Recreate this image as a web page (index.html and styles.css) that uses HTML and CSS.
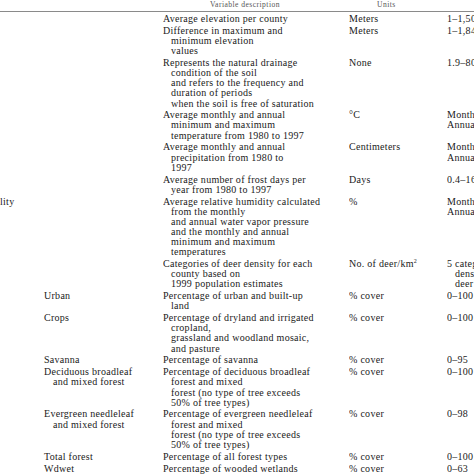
FILE: index.html
```html
<!DOCTYPE html>
<html>
<head>
<meta charset="utf-8">
<link rel="stylesheet" href="styles.css">
</head>
<body>
<div class="page">
  <div class="head">
    <div class="h-desc">Variable description</div>
    <div class="h-units">Units</div>
  </div>
  <div class="table">
    <div class="lab"></div><div class="desc">Average elevation per county</div><div class="unit">Meters</div><div class="rng">1–1,500</div>
    <div class="lab"></div><div class="desc">Difference in maximum and<br>minimum elevation<br>values</div><div class="unit">Meters</div><div class="rng">1–1,840</div>
    <div class="lab"></div><div class="desc">Represents the natural drainage<br>condition of the soil<br>and refers to the frequency and<br>duration of periods<br>when the soil is free of saturation</div><div class="unit">None</div><div class="rng">1.9–80.0</div>
    <div class="lab"></div><div class="desc">Average monthly and annual<br>minimum and maximum<br>temperature from 1980 to 1997</div><div class="unit">°C</div><div class="rng flat">Monthly<br>Annual</div>
    <div class="lab"></div><div class="desc">Average monthly and annual<br>precipitation from 1980 to<br>1997</div><div class="unit">Centimeters</div><div class="rng flat">Monthly<br>Annual</div>
    <div class="lab"></div><div class="desc">Average number of frost days per<br>year from 1980 to 1997</div><div class="unit">Days</div><div class="rng">0.4–166</div>
    <div class="lab">lity</div><div class="desc">Average relative humidity calculated<br>from the monthly<br>and annual water vapor pressure<br>and the monthly and annual<br>minimum and maximum<br>temperatures</div><div class="unit">%</div><div class="rng flat">Monthly<br>Annual</div>
    <div class="lab"></div><div class="desc">Categories of deer density for each<br>county based on<br>1999 population estimates</div><div class="unit">No. of deer/km<sup>2</sup></div><div class="rng">5 categories of<br>density of<br>deer</div>
    <div class="lab sub">Urban</div><div class="desc">Percentage of urban and built-up<br>land</div><div class="unit">% cover</div><div class="rng">0–100</div>
    <div class="lab sub">Crops</div><div class="desc">Percentage of dryland and irrigated<br>cropland,<br>grassland and woodland mosaic,<br>and pasture</div><div class="unit">% cover</div><div class="rng">0–100</div>
    <div class="lab sub">Savanna</div><div class="desc">Percentage of savanna</div><div class="unit">% cover</div><div class="rng">0–95</div>
    <div class="lab sub">Deciduous broadleaf<br>and mixed forest</div><div class="desc">Percentage of deciduous broadleaf<br>forest and mixed<br>forest (no type of tree exceeds<br>50% of tree types)</div><div class="unit">% cover</div><div class="rng">0–100</div>
    <div class="lab sub">Evergreen needleleaf<br>and mixed forest</div><div class="desc">Percentage of evergreen needleleaf<br>forest and mixed<br>forest (no type of tree exceeds<br>50% of tree types)</div><div class="unit">% cover</div><div class="rng">0–98</div>
    <div class="lab sub">Total forest</div><div class="desc">Percentage of all forest types</div><div class="unit">% cover</div><div class="rng">0–100</div>
    <div class="lab sub">Wdwet</div><div class="desc">Percentage of wooded wetlands</div><div class="unit">% cover</div><div class="rng">0–63</div>
  </div>
</div>
</body>
</html>
```
FILE: styles.css
```css
html, body {
  margin: 0;
  padding: 0;
  background: #ffffff;
}
.page {
  width: 474px;
  height: 474px;
  overflow: hidden;
  font-family: "Liberation Serif", "Times New Roman", serif;
  color: #1a1a1a;
}
.head {
  display: grid;
  grid-template-columns: 377px 1fr;
  height: 11px;
  border-bottom: 1.5px solid #8a8a8a;
  font-size: 7.6px;
  letter-spacing: 0.45px;
  line-height: 10px;
  color: #555;
}
.h-desc {
  padding-left: 210px;
  white-space: nowrap;
}
.table {
  display: grid;
  grid-template-columns: 163px 186px 98px 1fr;
  row-gap: 1.65px;
  padding-top: 2px;
  font-size: 10px;
  letter-spacing: 0.28px;
  line-height: 10.15px;
}
.table > div {
  white-space: nowrap;
  overflow: hidden;
}
.desc, .rng {
  padding-left: 8px;
  text-indent: -8px;
}
.rng.flat {
  padding-left: 0;
  text-indent: 0;
}
.lab.sub {
  padding-left: 53px;
  text-indent: -9px;
}
.unit sup {
  font-size: 6px;
  line-height: 0;
  vertical-align: 4px;
}
```
